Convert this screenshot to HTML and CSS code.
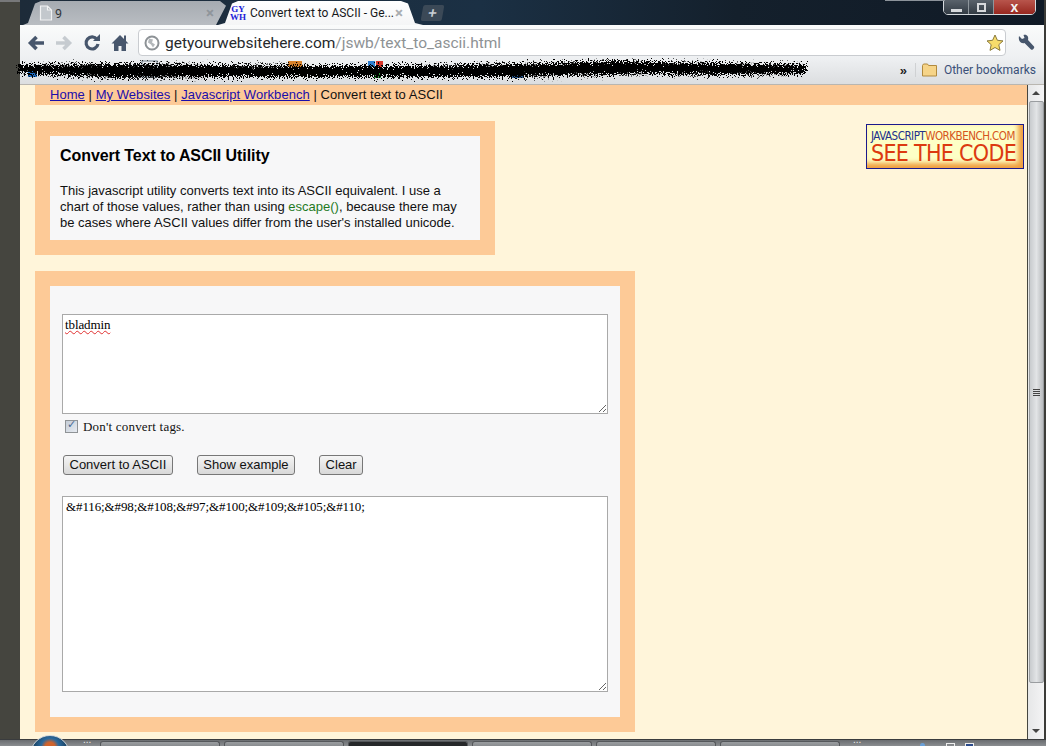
FILE: index.html
```html
<!DOCTYPE html>
<html lang="en">
<head>
  <meta charset="UTF-8">
  <title>Convert text to ASCII</title>
  <link rel="stylesheet" href="styles.css">
</head>
<body>
  <div class="screen">
    <div class="desk-strip"></div>
    <div class="window">
      <!-- tab strip -->
      <div class="titlebar">
        <div class="tab tab-off">
          <svg class="tab-icon" width="14" height="16" viewBox="0 0 14 16"><path d="M1.500 1h7l4 4v10h-11z M8.500 1v4h4" fill="#c3c8cd" stroke="#f1f2f3" stroke-width="1.200"/></svg>
          <span class="tab-title tab-title-off">9</span>
          <span class="tab-close tab-close-off">×</span>
        </div>
        <div class="tab tab-on">
          <span class="favicon"><span>GY</span><span>WH</span></span>
          <span class="tab-title">Convert text to ASCII - Ge...</span>
          <span class="tab-close">×</span>
        </div>
        <div class="new-tab">+</div>
        <div class="win-controls">
          <span class="win-btn win-min"><i></i></span>
          <span class="win-btn win-max"><i></i></span>
          <span class="win-btn win-close">x</span>
        </div>
      </div>

      <!-- toolbar -->
      <div class="toolbar">
        <svg class="tool" width="18" height="16" viewBox="0 0 18 16"><path d="M17 8H5M9.500 2L3.500 8l6 6" fill="none" stroke="#47566c" stroke-width="3.600"/></svg>
        <svg class="tool" width="18" height="16" viewBox="0 0 18 16"><path d="M1 8h12M8.500 2l6 6-6 6" fill="none" stroke="#c6cbd0" stroke-width="3.600"/></svg>
        <svg class="tool" width="18" height="18" viewBox="0 0 18 18"><path d="M14 5.500A6 6 0 1 0 15 10" fill="none" stroke="#47566c" stroke-width="3.200"/><path d="M10 7H17V0z" fill="#47566c"/></svg>
        <svg class="tool" width="18" height="18" viewBox="0 0 18 18"><path d="M9 1L0.500 9.500h2.500V17h4.500v-5h3v5H15V9.500h2.500L15 7V1.500h-2V5z" fill="#47566c"/></svg>
        <div class="omnibox">
          <svg width="16" height="16" viewBox="0 0 16 16"><circle cx="8" cy="8" r="6.500" fill="#fff" stroke="#8d9296" stroke-width="2"/><path d="M5 3.500l4 1-1 3 3 2-2 3-2-3-3-2z" fill="#b4b8bb"/></svg>
          <span class="url">getyourwebsitehere.com<span class="url-path">/jswb/text_to_ascii.html</span></span>
          <svg class="star" width="18" height="18" viewBox="0 0 18 18"><path d="M9 1l2.400 5.300 5.600.6-4.200 3.800 1.200 5.700L9 13.500l-5 2.900 1.200-5.700L1 6.900l5.600-.6z" fill="#f7dc6b" stroke="#8a7a3c"/></svg>
        </div>
        <svg class="wrench" width="18" height="18" viewBox="0 0 18 18"><path d="M2 2l3 3 2.500-1-1-3C10 0 12 3 11 6l6 6.500c1 1.500-1.500 4-3 3L7.500 9C4 10 1 7 2 2z" fill="#47566c"/></svg>
      </div>

      <!-- bookmarks, scribbled over in the original -->
      <div class="bookmarks">
        <svg class="scribble" width="800" height="24" viewBox="0 0 800 24">
          <defs>
            <filter id="rough" x="-2%" y="-40%" width="104%" height="180%">
              <feTurbulence type="fractalNoise" baseFrequency="0.8 0.9" numOctaves="3" seed="7"/>
              <feDisplacementMap in="SourceGraphic" scale="16" xChannelSelector="R" yChannelSelector="G"/>
            </filter>
          </defs>
          <rect x="12" y="12" width="9" height="7" fill="#1f6fc4"/>
          <rect x="126" y="3" width="15" height="16" fill="none" stroke="#6b7a88"/>
          <rect x="272" y="3" width="14" height="6" fill="#d9822b"/>
          <rect x="352" y="3" width="7" height="6" fill="#2f7fd0"/>
          <rect x="360" y="3" width="7" height="6" fill="#d8352a"/>
          <rect x="358" y="15" width="7" height="5" fill="#2a9a3a"/>
          <rect x="496" y="8" width="12" height="12" fill="#26568f"/>
          <path d="M2 7 L100 6 L200 7 L300 8 L400 8 L500 6 L600 3 L640 4 L700 5 L790 7 L790 16 L700 17 L640 16 L500 19 L400 19 L300 19 L200 19 L100 20 L2 15z" fill="#000" filter="url(#rough)"/>
        </svg>
        <span class="chevrons">»</span>
        <span class="bm-sep"></span>
        <svg width="16" height="14" viewBox="0 0 16 14"><path d="M.5 13V2.500l1-1.500h4l1 1.500h8V13z" fill="#f6d488" stroke="#b18a3e"/></svg>
        <span class="other-bm">Other bookmarks</span>
      </div>

      <!-- page and scrollbar -->
      <div class="viewport">
        <div class="page">
          <div class="crumbs">
            <a href="#">Home</a> | <a href="#">My Websites</a> | <a href="#">Javascript Workbench</a> | Convert text to ASCII
          </div>
          <div class="top-row">
            <div class="panel panel-intro">
              <div class="panel-inner intro">
                <h1>Convert Text to ASCII Utility</h1>
                <p>This javascript utility converts text into its ASCII equivalent. I use a chart of those values, rather than using <span class="code">escape()</span>, because there may be cases where ASCII values differ from the user's installed unicode.</p>
              </div>
            </div>
            <a class="banner" href="#">
              <span class="banner-site"><span class="site-a">JAVASCRIPT</span><span class="site-b">WORKBENCH.COM</span></span>
              <span class="banner-see">SEE THE CODE</span>
            </a>
          </div>
          <div class="panel panel-tool">
            <div class="panel-inner tool-form">
              <textarea class="input-box" spellcheck="false">tbladmin</textarea>
              <label class="check-row"><input type="checkbox" checked> Don't convert tags.</label>
              <div class="buttons">
                <button>Convert to ASCII</button>
                <button>Show example</button>
                <button>Clear</button>
              </div>
              <textarea class="output-box" spellcheck="false">&amp;#116;&amp;#98;&amp;#108;&amp;#97;&amp;#100;&amp;#109;&amp;#105;&amp;#110;</textarea>
            </div>
          </div>
        </div>
        <div class="scrollbar">
          <span class="arrow arrow-up"></span>
          <div class="thumb"><i></i><i></i><i></i><i></i></div>
          <span class="arrow arrow-down"></span>
        </div>
      </div>
    </div>
    <div class="edge"></div>
  </div>

  <!-- taskbar -->
  <div class="taskbar">
    <span class="orb"></span>
    <span class="dots">...</span>
    <span class="task"></span>
    <span class="task"></span>
    <span class="task task-on"></span>
    <span class="task"></span>
    <span class="task"></span>
    <span class="task"></span>
    <span class="dots dots-right">...</span>
    <span class="tray tray-a"></span>
    <span class="tray tray-b"></span>
    <span class="tray tray-c"></span>
  </div>
</body>
</html>
```

FILE: styles.css
```css
* {
  box-sizing: border-box;
}
html, body {
  margin: 0;
  height: 100%;
}
body {
  display: flex;
  flex-direction: column;
  width: 1046px;
  height: 746px;
  overflow: hidden;
  font-family: "Liberation Sans", Arial, sans-serif;
  background-color: #45453f;
}
.screen {
  display: flex;
  height: 739px;
}
.desk-strip {
  width: 20px;
  background-color: #45453f;
  border-top: 2px solid #77787a;
}
.edge {
  width: 2px;
  background-color: #3c3c38;
}
.window {
  flex: 1;
  display: flex;
  flex-direction: column;
  min-width: 0;
}

/* tab strip */
.titlebar {
  position: relative;
  display: flex;
  align-items: flex-end;
  height: 25px;
  padding-left: 3px;
  background: linear-gradient(90deg, #1d2b39 0%, #1b3044 45%, #14202c 70%, #101a26 100%);
}
.titlebar::after {
  content: "";
  position: absolute;
  top: 0;
  left: 865px;
  width: 60px;
  height: 1px;
  background-color: #8c939a;
}
.tab {
  display: flex;
  align-items: center;
  height: 24px;
  padding: 0 8px 0 16px;
  font-family: Roboto, sans-serif;
  font-size: 12px;
}
.tab-off {
  width: 203px;
  background: linear-gradient(#a6abb1, #b9bdc2);
  clip-path: polygon(0 100%, 5px 92%, 12px 10%, 18px 0, calc(100% - 6px) 0, 100% 20%, calc(100% - 10px) 100%);
}
.tab-on {
  width: 205px;
  margin-left: -8px;
  padding-left: 12px;
  background: linear-gradient(#fff, #f4f5f6);
  clip-path: polygon(0 100%, 7px 92%, 14px 10%, 20px 0, calc(100% - 22px) 0, calc(100% - 15px) 10%, calc(100% - 8px) 92%, 100% 100%);
}
.tab-icon {
  flex: none;
  margin: 0 2px 0 0;
}
.tab-title {
  flex: 1;
  color: #16181a;
  white-space: nowrap;
  font-size: 12px;
}
.tab-title-off {
  color: #33373b;
  font-size: 12.500px;
}
.tab-close {
  color: #a9adb1;
  font-size: 15px;
  font-weight: bold;
  margin-right: 12px;
}
.tab-close-off {
  color: #8f959b;
  margin-right: 4px;
}
.favicon {
  display: flex;
  flex-direction: column;
  flex: none;
  width: 16px;
  margin-right: 4px;
  color: #1c1cd8;
  font-family: "Liberation Serif", serif;
  font-size: 9px;
  font-weight: bold;
  line-height: 8px;
  text-align: center;
}
.new-tab {
  width: 21px;
  height: 16px;
  margin: 0 0 4px -1px;
  background-color: #3b4957;
  border-radius: 2px;
  color: #c9cfd5;
  font-size: 15px;
  font-weight: bold;
  line-height: 15px;
  text-align: center;
  transform: skewX(-10deg);
}
.win-controls {
  position: absolute;
  top: -1px;
  right: 8px;
  display: flex;
  width: 93px;
  height: 16px;
  border: 1px solid #d5dade;
  border-radius: 0 0 5px 5px;
  overflow: hidden;
}
.win-btn {
  display: flex;
  align-items: center;
  justify-content: center;
  border-right: 1px solid #8e969c;
  background: linear-gradient(#59626b, #323b44);
}
.win-min {
  width: 25px;
}
.win-min i {
  width: 11px;
  height: 3px;
  margin-top: 6px;
  background-color: #d6d9dc;
}
.win-max {
  width: 25px;
}
.win-max i {
  width: 9px;
  height: 9px;
  border: 2px solid #d6d9dc;
}
.win-close {
  flex: 1;
  border-right: none;
  background: linear-gradient(#b8554c, #97271f);
  color: #f4f4f4;
  font-size: 14px;
  font-weight: bold;
  line-height: 14px;
}

/* toolbar */
.toolbar {
  display: flex;
  align-items: center;
  height: 33px;
  padding: 2px 0 0 7px;
  background: linear-gradient(#fafbfb, #eef0f2);
}
.tool {
  flex: none;
  margin-right: 10px;
}
.omnibox {
  display: flex;
  align-items: center;
  gap: 5px;
  width: 868px;
  height: 27px;
  margin-left: -1px;
  padding: 0 1px 0 5px;
  background-color: #fff;
  border: 1px solid #c9ccd0;
  border-radius: 4px;
}
.url {
  flex: 1;
  color: #26292c;
  font-family: Roboto, sans-serif;
  font-size: 15.500px;
}
.url-path {
  color: #8e9294;
}
.wrench {
  flex: none;
  margin-left: 11px;
}

/* bookmarks bar */
.bookmarks {
  position: relative;
  display: flex;
  align-items: center;
  justify-content: flex-end;
  height: 27px;
  padding: 0 0 2px 0;
  background: linear-gradient(#eef0f2, #dcdee0);
  border-bottom: 1px solid #b9b6b0;
}
.scribble {
  position: absolute;
  top: 0;
  left: -4px;
}
.chevrons {
  margin-right: 8px;
  color: #222;
  font-size: 13px;
  font-weight: bold;
}
.bm-sep {
  width: 1px;
  height: 14px;
  margin-right: 6px;
  background-color: #cfd1d3;
}
.other-bm {
  margin: 0 8px 0 6px;
  color: #3a5078;
  font-family: Roboto, sans-serif;
  font-size: 12px;
}

/* page */
.viewport {
  flex: 1;
  display: flex;
  min-height: 0;
}
.page {
  flex: 1;
  min-width: 0;
  padding: 0 0 0 15px;
  background-color: #fff5da;
  overflow: hidden;
  font-size: 13px;
}
.crumbs {
  height: 20px;
  padding-left: 15px;
  background-color: #fdca97;
  color: #111;
  line-height: 20px;
  letter-spacing: 0.05px;
}
.crumbs a {
  color: #1a0dab;
}
.top-row {
  display: flex;
  justify-content: space-between;
  align-items: flex-start;
  margin: 16px 0;
}
.panel {
  border: 15px solid #fdca97;
  background-color: #f7f7f8;
}
.panel-intro {
  width: 460px;
  height: 134px;
}
.panel-tool {
  width: 600px;
  height: 461px;
}
.intro {
  padding: 10px;
}
.intro h1 {
  margin: 0 0 18px;
  color: #000;
  font-size: 16px;
  line-height: 19px;
  letter-spacing: -0.07px;
}
.intro p {
  margin: 0;
  color: #111;
  line-height: 16px;
}
.code {
  color: #1f7a1f;
}
.banner {
  display: flex;
  flex-direction: column;
  width: 158px;
  height: 45px;
  margin: 3px 3px 0 0;
  padding: 6px 4px 0;
  background-color: #fdffc6;
  border: 1px solid #1a1a8c;
  box-shadow: inset -5px -5px 5px #f0a040, inset 2px 2px 2px #fff6c0;
  text-decoration: none;
  font-family: "DejaVu Sans", sans-serif;
  font-stretch: condensed;
  white-space: nowrap;
}
.banner-site {
  font-size: 11.500px;
  line-height: 11px;
  letter-spacing: -0.5px;
}
.site-a {
  color: #22308c;
}
.site-b {
  color: #d6551c;
}
.banner-see {
  color: #dc3a10;
  font-size: 23px;
  line-height: 22px;
  letter-spacing: -0.7px;
}
.tool-form {
  padding: 28px 12px 0;
  font-family: "Liberation Serif", serif;
  font-size: 13px;
}
.tool-form textarea {
  display: block;
  width: 546px;
  padding: 2px 3px;
  background-color: #fff;
  border: 1px solid #a9a9a9;
  color: #000;
  font-family: "Liberation Serif", serif;
  font-size: 13px;
  letter-spacing: -0.11px;
  outline: none;
}
.tool-form .input-box {
  height: 100px;
  padding-left: 2px;
  text-decoration: underline wavy #e03030 1px;
}
.output-box {
  height: 196px;
}
.check-row {
  display: flex;
  align-items: center;
  height: 26px;
  padding-left: 3px;
  color: #111;
  letter-spacing: 0.2px;
}
.check-row input {
  appearance: none;
  position: relative;
  width: 13px;
  height: 13px;
  margin: -2px 5px 0 0;
  background: linear-gradient(135deg, #c6ced8, #e6eaf0);
  border: 1px solid #8f9396;
}
.check-row input::after {
  content: "✓";
  position: absolute;
  top: -3px;
  left: 1px;
  color: #4a6a96;
  font-family: "DejaVu Sans", sans-serif;
  font-size: 11px;
  font-weight: bold;
}
.buttons {
  display: flex;
  gap: 24px;
  margin: 15px 0 21px 1px;
}
.buttons button {
  height: 20px;
  padding: 0 5.500px;
  background: linear-gradient(#f5f5f5, #d8d8d8);
  border: 1px solid #777;
  border-radius: 3px;
  color: #111;
  font-family: "Liberation Sans", Arial, sans-serif;
  font-size: 13px;
  line-height: 18px;
}

/* scrollbar */
.scrollbar {
  display: flex;
  flex-direction: column;
  align-items: center;
  width: 16px;
  margin-left: 1px;
  background: linear-gradient(90deg, #e6e7e8, #f4f4f5);
}
.arrow {
  width: 0;
  height: 0;
  margin: 6px 0;
  border-left: 4px solid transparent;
  border-right: 4px solid transparent;
}
.arrow-up {
  border-bottom: 4px solid #444;
}
.arrow-down {
  margin-top: auto;
  border-top: 4px solid #444;
}
.thumb {
  display: flex;
  flex-direction: column;
  align-items: center;
  justify-content: center;
  gap: 1px;
  width: 15px;
  height: 582px;
  background: linear-gradient(90deg, #c8cbce, #e2e4e6 50%, #b8bbbe);
  border: 1px solid #9a9da0;
  border-radius: 2px;
}
.thumb i {
  width: 7px;
  height: 1px;
  background-color: #444;
}

/* taskbar */
.taskbar {
  position: relative;
  display: flex;
  align-items: flex-start;
  gap: 4px;
  height: 7px;
  padding: 1px 0 0 100px;
  background: linear-gradient(#6a6d70, #8a8d90);
  border-top: 1px solid #3a3c3e;
}
.orb {
  position: absolute;
  top: -5px;
  left: 30px;
  width: 40px;
  height: 40px;
  background: radial-gradient(circle at 50% 30%, #d0632c 0 5px, #2a6a9e 9px, #16364f 19px);
  border: 1px solid #cfd6dc;
  border-radius: 50%;
}
.dots {
  position: absolute;
  top: -4px;
  left: 83px;
  color: #eee;
  font-size: 10px;
  line-height: 8px;
}
.dots-right {
  left: 853px;
}
.task {
  width: 120px;
  height: 6px;
  background: linear-gradient(#9a9da0, #85888b);
  border: 1px solid #55585b;
  border-bottom: none;
  border-radius: 3px 3px 0 0;
}
.task-on {
  background: #26282a;
}
.tray {
  position: absolute;
  top: 3px;
  width: 9px;
  height: 4px;
  border: 1px solid #eee;
  border-bottom: none;
}
.tray-a {
  left: 946px;
}
.tray-b {
  left: 965px;
  background-color: #2a4a8a;
}
.tray-c {
  left: 920px;
  width: 5px;
  background-color: #6aa0d8;
  border: none;
  border-radius: 3px 3px 0 0;
}
```
